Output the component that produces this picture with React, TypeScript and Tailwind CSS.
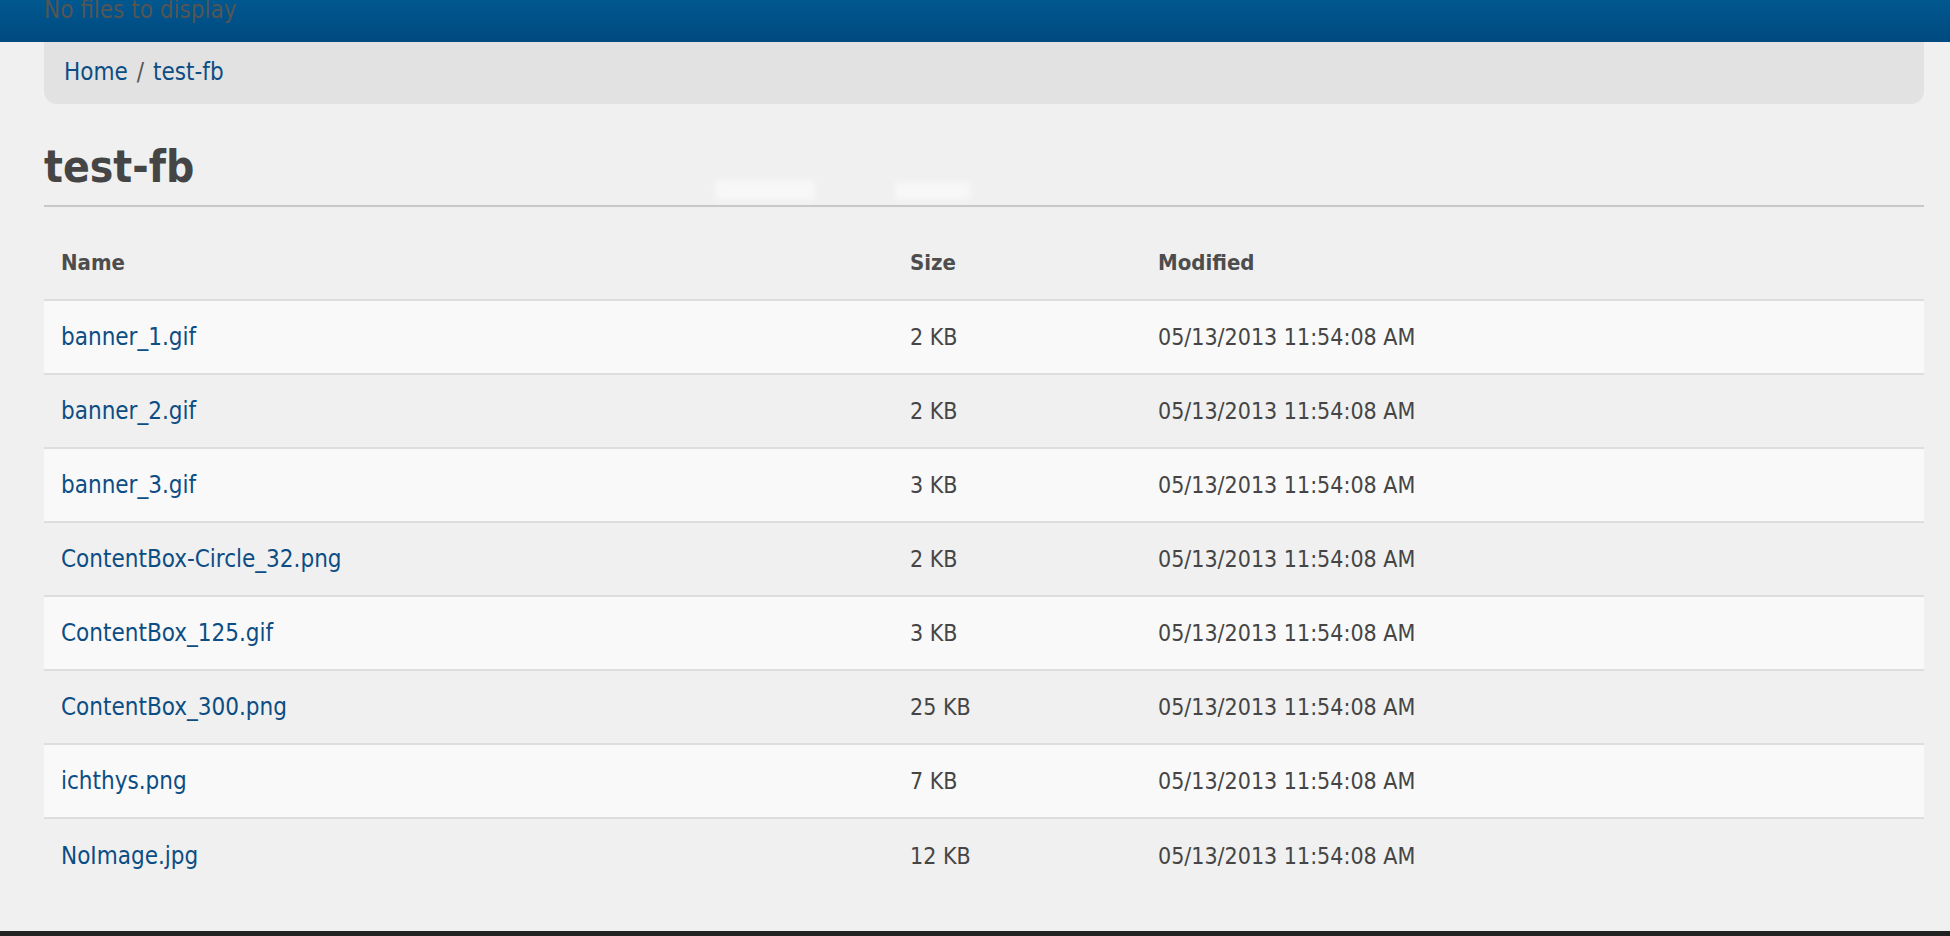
import React from "react";

const files = [
  { name: "banner_1.gif", size: "2 KB", modified: "05/13/2013 11:54:08 AM" },
  { name: "banner_2.gif", size: "2 KB", modified: "05/13/2013 11:54:08 AM" },
  { name: "banner_3.gif", size: "3 KB", modified: "05/13/2013 11:54:08 AM" },
  { name: "ContentBox-Circle_32.png", size: "2 KB", modified: "05/13/2013 11:54:08 AM" },
  { name: "ContentBox_125.gif", size: "3 KB", modified: "05/13/2013 11:54:08 AM" },
  { name: "ContentBox_300.png", size: "25 KB", modified: "05/13/2013 11:54:08 AM" },
  { name: "ichthys.png", size: "7 KB", modified: "05/13/2013 11:54:08 AM" },
  { name: "NoImage.jpg", size: "12 KB", modified: "05/13/2013 11:54:08 AM" },
];

const font = "font-['DejaVu_Sans_Condensed','DejaVu_Sans',sans-serif]";

function FileRow({ file, index, last }: { file: (typeof files)[0]; index: number; last: boolean }) {
  const striped = index % 2 === 0;
  return (
    <div
      className={`grid grid-cols-[866px_248px_1fr] h-[74px] items-center ${
        striped ? "bg-[#f9f9f9]" : "bg-[#f0f0f0]"
      } ${last ? "" : "border-b-2 border-[#dddddd]"}`}
    >
      <a href="#" className="pl-[17px] text-[24px] leading-[24px] text-[#0c4d84]">
        {file.name}
      </a>
      <span className="text-[23px] leading-[24px] text-[#454545]">{file.size}</span>
      <span className="text-[23px] leading-[24px] text-[#454545]">{file.modified}</span>
    </div>
  );
}

export default function App() {
  return (
    <div className={`${font} h-[936px] overflow-hidden flex flex-col bg-[#f0f0f0]`}>
      <header className="h-[42px] overflow-hidden bg-gradient-to-b from-[#00588f] to-[#004a80]">
        <p className="ml-[44px] -mt-[2px] text-[24px] leading-[24px] text-[#555555]">No files to display</p>
      </header>

      <main className="relative flex-1 ml-[44px] w-[1880px]">
        <nav className="bg-[#e2e2e2] rounded-b-[13px] pt-[18px] pb-[20px] pl-[20px] text-[24px] leading-[24px]">
          <a href="#" className="text-[#0c4d84]">Home</a>
          <span className="px-[9px] text-[#555555]">/</span>
          <a href="#" className="text-[#0c4d84]">test-fb</a>
        </nav>

        <div className="mt-[39px] pb-[14px] border-b-2 border-[#c8c8c8]">
          <h1 className="text-[44px] leading-[48px] font-bold text-[#454545]">test-fb</h1>
        </div>

        {/* faint ghosting left over in the capture */}
        <div className="absolute left-[671px] top-[138px] w-[100px] h-[20px] bg-white/50 blur-[3px]" />
        <div className="absolute left-[851px] top-[140px] w-[75px] h-[18px] bg-white/50 blur-[3px]" />

        <div className="mt-[20px]">
          <div className="grid grid-cols-[866px_248px_1fr] h-[74px] items-center border-b-2 border-[#dddddd] text-[22px] leading-[24px] font-bold text-[#4d4d4d]">
            <span className="pl-[17px]">Name</span>
            <span>Size</span>
            <span>Modified</span>
          </div>
          {files.map((file, i) => (
            <FileRow key={file.name} file={file} index={i} last={i === files.length - 1} />
          ))}
        </div>
      </main>

      <footer className="h-[5px] bg-[#222222]" />
    </div>
  );
}
